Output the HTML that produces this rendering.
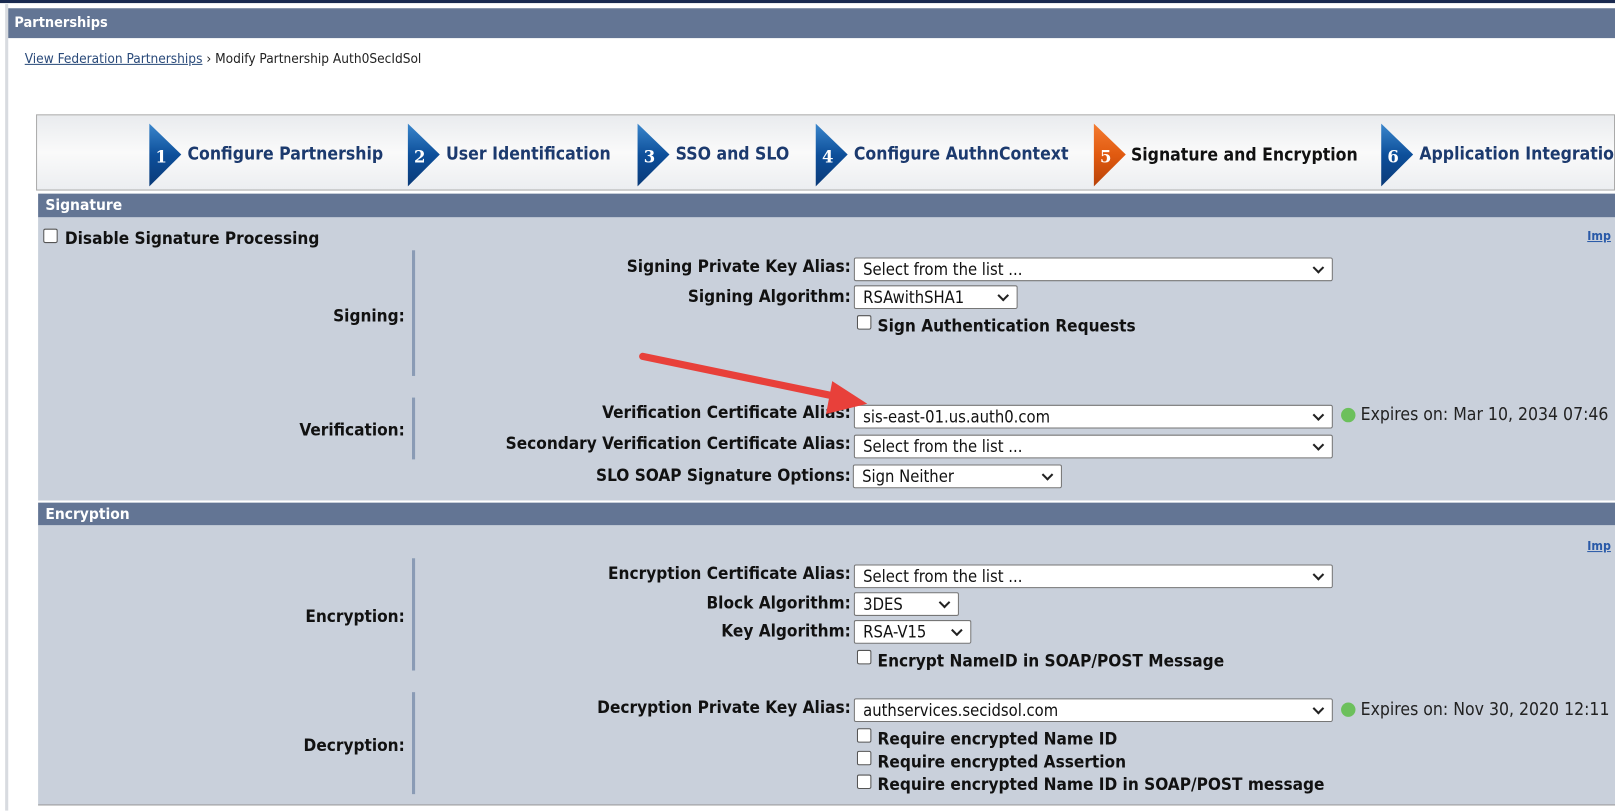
<!DOCTYPE html>
<html><head><meta charset="utf-8"><style>
html,body{margin:0;padding:0;width:1615px;height:811px;overflow:hidden;background:#fff}
#s{position:absolute;left:0;top:0;width:1568px;height:787px;transform:scale(1.03);transform-origin:0 0;font-family:"DejaVu Sans Condensed","DejaVu Sans",sans-serif;}
.a{position:absolute;white-space:nowrap}
.hd{position:absolute;background:#637594;color:#fff;font-weight:bold;font-size:15px}
.bd{position:absolute;background:#c9d0db}
.lb{position:absolute;white-space:nowrap;font-weight:bold;font-size:16.6px;color:#111;text-align:right;margin-top:1px}
.sel{position:absolute;background:#fff;border:1px solid #767676;border-radius:2px;box-sizing:border-box;font-size:16px;color:#111;padding-left:8px;line-height:21px;font-family:"DejaVu Sans Condensed","DejaVu Sans",sans-serif}
.sel:after{content:"";position:absolute;right:9px;top:5px;width:6px;height:6px;border-right:2px solid #222;border-bottom:2px solid #222;transform:rotate(45deg)}
.cb{position:absolute;width:12px;height:12px;border:1px solid #555;border-radius:2px;background:#fff}
.dv{position:absolute;width:3px;background:#8a9bb5}
.st{position:absolute;font-weight:bold;font-size:17px;color:#1c3a6e;white-space:nowrap;margin-top:1px}
.ex{position:absolute;font-size:17px;color:#222;white-space:nowrap}
.gd{position:absolute;width:14px;height:14px;border-radius:50%;background:#6cc05c}
.imp{position:absolute;font-size:12px;font-weight:bold;color:#2a5aa8;text-decoration:underline}
</style></head><body><div id="s">
<div style="position:absolute;left:0;top:0;width:1568px;height:3px;background:#1a2a50"></div>
<div style="position:absolute;left:5px;top:4px;width:3px;height:783px;background:#d8dbe0"></div>
<div class="hd" style="left:8px;top:8px;width:1560px;height:29px;line-height:29px;padding-left:6px;font-size:14px">Partnerships</div>
<div class="a" style="left:24px;top:50px;font-size:13.2px;color:#222"><span style="color:#2a4a7a;text-decoration:underline">View Federation Partnerships</span> › Modify Partnership Auth0SecIdSol</div>

<div style="position:absolute;left:35px;top:111px;width:1533px;height:74px;border:1px solid #aaa;box-sizing:border-box;background:linear-gradient(#e9ebee,#fafafa 50%,#eceef1)"></div>
<svg style="position:absolute;left:0;top:0" width="1568" height="200">
<defs><linearGradient id="b" x1="0" x2="0" y1="0" y2="1"><stop offset="0" stop-color="#3a86cc"/><stop offset="0.5" stop-color="#0d4f9a"/><stop offset="1" stop-color="#0a3a78"/></linearGradient>
<linearGradient id="o" x1="0" x2="0" y1="0" y2="1"><stop offset="0" stop-color="#f47b30"/><stop offset="0.5" stop-color="#e15a10"/><stop offset="1" stop-color="#b84208"/></linearGradient></defs>
<g font-family="DejaVu Serif,serif" font-weight="bold" font-size="16" fill="#fff">
<polygon points="145,120 176,150 145,181" fill="url(#b)"/><text x="151" y="158">1</text>
<polygon points="396,120 427,150 396,181" fill="url(#b)"/><text x="402" y="158">2</text>
<polygon points="619,120 650,150 619,181" fill="url(#b)"/><text x="625" y="158">3</text>
<polygon points="792,120 823,150 792,181" fill="url(#b)"/><text x="798" y="158">4</text>
<polygon points="1062,120 1093,150 1062,181" fill="url(#o)"/><text x="1068" y="158">5</text>
<polygon points="1341,120 1372,150 1341,181" fill="url(#b)"/><text x="1347" y="158">6</text>
</g></svg>
<div class="st" style="left:182px;top:139px">Configure Partnership</div>
<div class="st" style="left:433px;top:139px">User Identification</div>
<div class="st" style="left:656px;top:139px">SSO and SLO</div>
<div class="st" style="left:829px;top:139px">Configure AuthnContext</div>
<div class="st" style="left:1098px;top:140px;color:#111">Signature and Encryption</div>
<div class="st" style="left:1378px;top:139px">Application Integration</div>

<div class="hd" style="left:37px;top:188px;width:1531px;height:23px;line-height:23px;padding-left:7px">Signature</div>
<div class="bd" style="left:37px;top:211px;width:1531px;height:275px"></div>
<div class="cb" style="left:42px;top:222px"></div>
<div class="lb" style="left:63px;top:221px">Disable Signature Processing</div>
<div class="imp" style="left:1541px;top:222px">Imp</div>
<div class="dv" style="left:400px;top:243px;height:122px"></div>
<div class="lb" style="right:1175px;top:296px">Signing:</div>
<div class="lb" style="right:742px;top:248px">Signing Private Key Alias:</div>
<div class="sel" style="left:829px;top:250px;width:465px;height:23px">Select from the list ...</div>
<div class="lb" style="right:742px;top:277px">Signing Algorithm:</div>
<div class="sel" style="left:829px;top:277px;width:159px;height:23px">RSAwithSHA1</div>
<div class="cb" style="left:832px;top:306px"></div>
<div class="lb" style="left:852px;top:306px">Sign Authentication Requests</div>
<div class="dv" style="left:400px;top:386px;height:60px"></div>
<div class="lb" style="right:1175px;top:407px">Verification:</div>
<div class="lb" style="right:742px;top:390px">Verification Certificate Alias:</div>
<div class="sel" style="left:829px;top:393px;width:465px;height:23px">sis-east-01.us.auth0.com</div>
<div class="gd" style="left:1302px;top:396px"></div>
<div class="ex" style="left:1321px;top:393px">Expires on: Mar 10, 2034 07:46</div>
<div class="lb" style="right:742px;top:420px">Secondary Verification Certificate Alias:</div>
<div class="sel" style="left:829px;top:422px;width:465px;height:23px">Select from the list ...</div>
<div class="lb" style="right:742px;top:451px">SLO SOAP Signature Options:</div>
<div class="sel" style="left:828px;top:451px;width:203px;height:23px">Sign Neither</div>

<div style="position:absolute;left:37px;top:486px;width:1531px;height:2px;background:#fff"></div>
<div class="hd" style="left:37px;top:488px;width:1531px;height:22px;line-height:22px;padding-left:7px">Encryption</div>
<div class="bd" style="left:37px;top:510px;width:1531px;height:271px;border-bottom:1px solid #999"></div>
<div class="imp" style="left:1541px;top:523px">Imp</div>
<div class="dv" style="left:400px;top:542px;height:109px"></div>
<div class="lb" style="right:1175px;top:588px">Encryption:</div>
<div class="lb" style="right:742px;top:546px">Encryption Certificate Alias:</div>
<div class="sel" style="left:829px;top:548px;width:465px;height:23px">Select from the list ...</div>
<div class="lb" style="right:742px;top:575px">Block Algorithm:</div>
<div class="sel" style="left:829px;top:575px;width:102px;height:23px">3DES</div>
<div class="lb" style="right:742px;top:602px">Key Algorithm:</div>
<div class="sel" style="left:829px;top:602px;width:114px;height:23px">RSA-V15</div>
<div class="cb" style="left:832px;top:631px"></div>
<div class="lb" style="left:852px;top:631px">Encrypt NameID in SOAP/POST Message</div>
<div class="dv" style="left:400px;top:672px;height:99px"></div>
<div class="lb" style="right:1175px;top:713px">Decryption:</div>
<div class="lb" style="right:742px;top:676px">Decryption Private Key Alias:</div>
<div class="sel" style="left:829px;top:678px;width:465px;height:23px">authservices.secidsol.com</div>
<div class="gd" style="left:1302px;top:682px"></div>
<div class="ex" style="left:1321px;top:679px">Expires on: Nov 30, 2020 12:11</div>
<div class="cb" style="left:832px;top:707px"></div>
<div class="lb" style="left:852px;top:707px">Require encrypted Name ID</div>
<div class="cb" style="left:832px;top:729px"></div>
<div class="lb" style="left:852px;top:729px">Require encrypted Assertion</div>
<div class="cb" style="left:832px;top:752px"></div>
<div class="lb" style="left:852px;top:751px">Require encrypted Name ID in SOAP/POST message</div>

<svg style="position:absolute;left:0;top:0" width="1568" height="500">
<line x1="624" y1="346" x2="812" y2="385" stroke="#e8403a" stroke-width="7" stroke-linecap="round"/>
<polygon points="842,392 808,370 802,402" fill="#e8403a"/>
</svg>
</div></body></html>
